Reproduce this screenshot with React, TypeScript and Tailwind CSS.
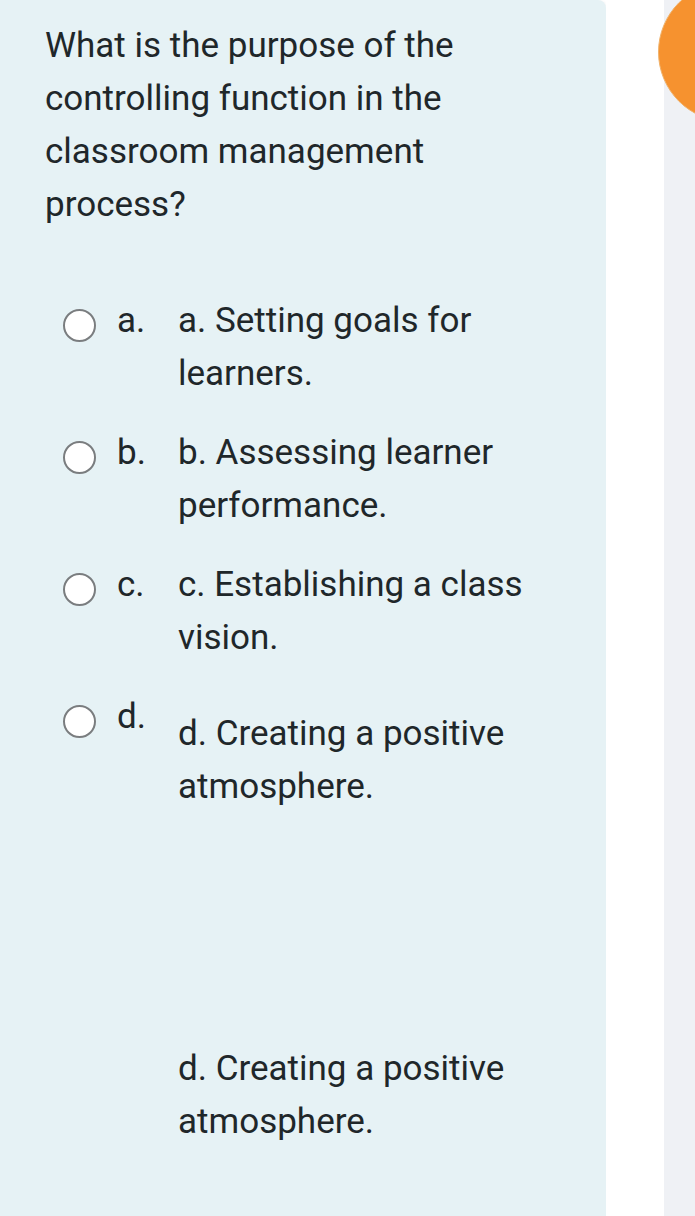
const options = [
  { key: "a.", text: "a. Setting goals for learners.", push: false },
  { key: "b.", text: "b. Assessing learner performance.", push: false },
  { key: "c.", text: "c. Establishing a class vision.", push: false },
  { key: "d.", text: "d. Creating a positive atmosphere.", push: true },
];

function Radio() {
  return (
    <span className="mt-[15px] block h-[33px] w-[33px] shrink-0 rounded-full border-2 border-[#7a7d7f] bg-white" />
  );
}

export default function App() {
  return (
    <div
      className="relative flex h-[1216px] w-[695px] overflow-hidden bg-white text-[#1f272a]"
      style={{ fontFamily: "Roboto, 'Liberation Sans', sans-serif" }}
    >
      {/* question card */}
      <div className="w-[606px] shrink-0 rounded-tr-lg bg-[#e6f2f5] pl-[45px] pr-[40px] pt-[19px] shadow-[1px_0_3px_rgba(0,0,0,0.04)]">
        <h2 className="w-[450px] text-[35px] leading-[53px]">
          What is the purpose of the controlling function in the classroom management process?
        </h2>

        <div className="mt-[63px] flex flex-col gap-[26px] pl-[18px]">
          {options.map((o) => (
            <div key={o.key} className="flex items-start">
              <Radio />
              <span className="ml-[21px] w-[61px] shrink-0 text-[35px] leading-[53px]">{o.key}</span>
              <p className={`w-[370px] text-[35px] leading-[53px] ${o.push ? "pt-[17px]" : ""}`}>{o.text}</p>
            </div>
          ))}
        </div>

        <p className="ml-[133px] mt-[229px] w-[370px] text-[35px] leading-[53px]">
          d. Creating a positive atmosphere.
        </p>
      </div>

      <div className="w-[58px] shrink-0 bg-white" />
      <div className="flex-1 bg-[#eff1f5]" />

      {/* orange avatar peeking in */}
      <div className="absolute left-[658px] top-[-18px] h-[140px] w-[140px] rounded-full border border-[#f0b26a] bg-[#f6922f]" />
    </div>
  );
}
